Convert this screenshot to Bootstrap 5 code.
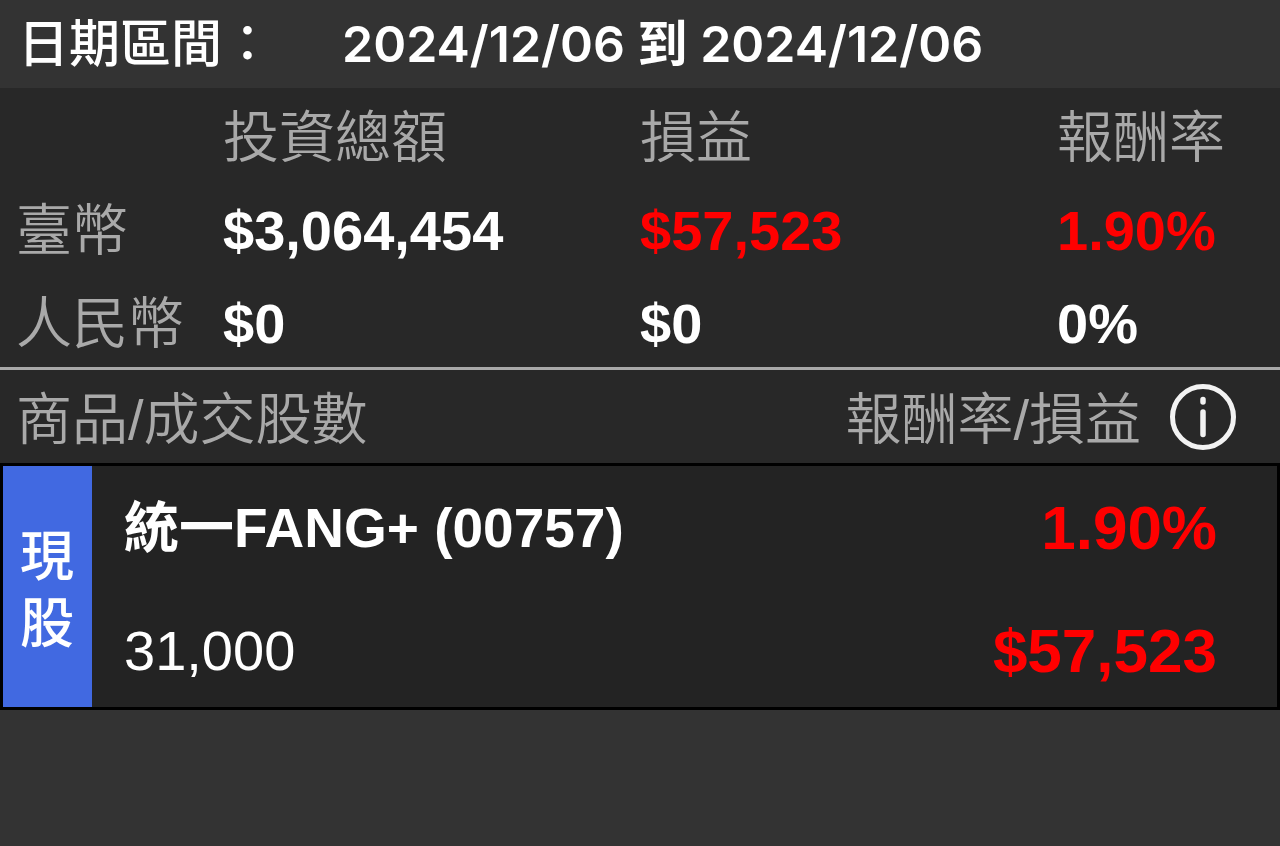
<!DOCTYPE html>
<html lang="zh-Hant" data-bs-theme="dark">
<head>
<meta charset="utf-8">
<meta name="viewport" content="width=device-width, initial-scale=1">
<title>日期區間</title>
<link rel="stylesheet" href="https://cdn.jsdelivr.net/npm/bootstrap@5.3.0/dist/css/bootstrap.min.css">
<style>
  body { background: #333; color: #fff; font-family: "Liberation Sans", "Noto Sans CJK TC", sans-serif; font-size: 56px; line-height: 64px; }
  .period { height: 88px; padding: 0 20px 0 18px; font-family: "Inter", "Noto Sans CJK TC", sans-serif; font-size: 50px; font-weight: 600; }
  .period-label { width: 324px; font-size: 51px; font-weight: 500; }
  .panel { background: #282828; }
  .soft { color: #a9a9a9; font-weight: 350; }
  .totals { table-layout: fixed; }
  .totals th, .totals td { height: 93px; padding: 6px 0 0; white-space: nowrap; vertical-align: middle; }
  .totals th:first-child { padding-left: 16px; }
  .totals td { font-weight: 700; }
  .col-label { width: 223px; }
  .col-sum { width: 417px; }
  .gain { color: #f00; }
  .list-head { height: 96px; padding: 0 39px 0 16px; border-top: 3px solid #a9a9a9; }
  .list-head .soft { padding-top: 6px; }
  .info-btn { line-height: 0; color: #f2f2f2; }
  .holding { background: #232323; border: 3px solid #000; }
  .kind { width: 89px; padding: 8px 17px 0; background: #4169e1; font-weight: 500; font-size: 54px; line-height: 67px; word-break: break-all; }
  .detail { padding: 30px 60px 24px 32px; gap: 59px; }
  .product { font-size: 55px; font-weight: 700; }
  .amount { font-size: 62px; font-weight: 700; }
</style>
</head>
<body>
<header class="period d-flex align-items-center text-nowrap">
  <div class="period-label">日期區間：</div>
  <div>2024/12/06 到 2024/12/06</div>
</header>
<main>
  <section class="panel">
    <table class="totals w-100">
      <colgroup><col class="col-label"><col class="col-sum"><col class="col-sum"><col></colgroup>
      <thead>
        <tr><th></th><th scope="col" class="soft">投資總額</th><th scope="col" class="soft">損益</th><th scope="col" class="soft">報酬率</th></tr>
      </thead>
      <tbody>
        <tr><th scope="row" class="soft">臺幣</th><td>$3,064,454</td><td class="gain">$57,523</td><td class="gain">1.90%</td></tr>
        <tr><th scope="row" class="soft">人民幣</th><td>$0</td><td>$0</td><td>0%</td></tr>
      </tbody>
    </table>
    <div class="list-head d-flex align-items-center text-nowrap">
      <div class="soft">商品/成交股數</div>
      <div class="soft ms-auto">報酬率/損益</div>
      <button type="button" class="info-btn btn p-0 border-0 ms-4" aria-label="說明">
        <svg width="76" height="76" viewBox="0 0 76 76" fill="none" stroke="currentColor" stroke-linecap="round">
          <circle cx="38" cy="38" r="30.5" stroke-width="5"/>
          <path d="M38 20.500v2.500M38 33v22.500" stroke-width="5.500"/>
        </svg>
      </button>
    </div>
  </section>
  <article class="holding d-flex">
    <div class="kind d-flex align-items-center"><span>現股</span></div>
    <div class="detail flex-grow-1 d-flex flex-column text-nowrap">
      <div class="d-flex align-items-center justify-content-between">
        <span class="product">統一FANG+ (00757)</span><span class="amount gain">1.90%</span>
      </div>
      <div class="d-flex align-items-center justify-content-between">
        <span>31,000</span><span class="amount gain">$57,523</span>
      </div>
    </div>
  </article>
</main>
<script src="https://cdn.jsdelivr.net/npm/bootstrap@5.3.0/dist/js/bootstrap.bundle.min.js"></script>
</body>
</html>
